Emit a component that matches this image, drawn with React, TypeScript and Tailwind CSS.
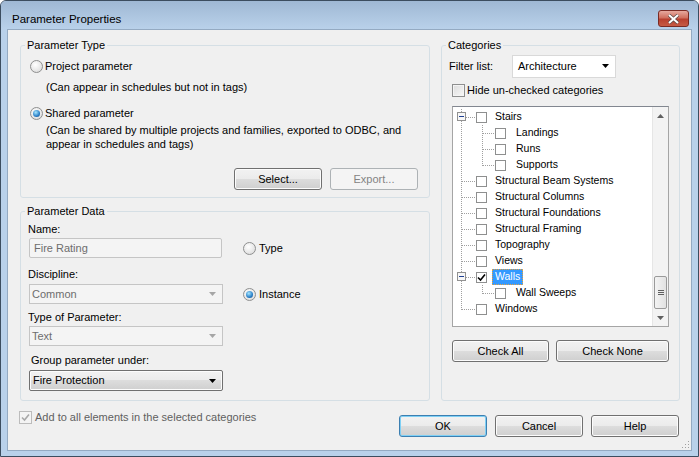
import React from "react";

type Row = {
  label: string;
  level: 0 | 1;
  expander?: boolean;
  checked?: boolean;
  selected?: boolean;
  last?: boolean;
};

const ROWS: Row[] = [
  { label: "Stairs", level: 0, expander: true },
  { label: "Landings", level: 1 },
  { label: "Runs", level: 1 },
  { label: "Supports", level: 1, last: true },
  { label: "Structural Beam Systems", level: 0 },
  { label: "Structural Columns", level: 0 },
  { label: "Structural Foundations", level: 0 },
  { label: "Structural Framing", level: 0 },
  { label: "Topography", level: 0 },
  { label: "Views", level: 0 },
  { label: "Walls", level: 0, expander: true, checked: true, selected: true },
  { label: "Wall Sweeps", level: 1, last: true },
  { label: "Windows", level: 0, last: true },
];

const BTN =
  "h-[22px] rounded-[3px] border flex items-center justify-center text-black border-[#707070] bg-[linear-gradient(#f2f2f2,#ebebeb_50%,#dddddd_50%,#cfcfcf)] shadow-[inset_0_0_0_1px_#fcfcfc]";

function Radio({ checked }: { checked?: boolean }) {
  return (
    <span className="w-[13px] h-[13px] shrink-0 rounded-full border border-[#8e8f8f] bg-[radial-gradient(circle_at_40%_35%,#ffffff,#d6d6d6)] flex items-center justify-center">
      {checked && (
        <span className="w-[7px] h-[7px] rounded-full bg-[radial-gradient(circle_at_40%_35%,#a6e6ff,#2a80c8_60%,#0d3f7a)]" />
      )}
    </span>
  );
}

function Tick({ color }: { color: string }) {
  return (
    <svg width="9" height="9" viewBox="0 0 9 9">
      <path d="M1 4.5 L3.5 7 L8 1.5" fill="none" stroke={color} strokeWidth="1.6" />
    </svg>
  );
}

function Arrow({ color }: { color: string }) {
  return (
    <svg width="7" height="4" viewBox="0 0 7 4">
      <path d="M0 0h7L3.5 4z" fill={color} />
    </svg>
  );
}

function Group({ title, className, children }: { title: string; className: string; children: React.ReactNode }) {
  return (
    <fieldset className={"border border-[#d5dfe5] rounded-[3px] min-w-0 " + className}>
      <legend className="ml-[4px] px-[2px] leading-[14px]">{title}</legend>
      {children}
    </fieldset>
  );
}

function Guides({ row }: { row: Row }) {
  const dot = { stroke: "#a0a0a0", strokeDasharray: "1 1" };
  if (row.level === 0) {
    return (
      <svg width="23" height="16" className="shrink-0">
        <line x1="8.5" y1="0" x2="8.5" y2={row.last ? 9 : 16} {...dot} />
        <line x1="9" y1="8.5" x2="23" y2="8.5" {...dot} />
        {row.expander && (
          <>
            <rect x="4.5" y="3.5" width="8" height="8" fill="#f7f7f7" stroke="#919191" />
            <rect x="6" y="7" width="5" height="1" fill="#1f3f93" />
          </>
        )}
      </svg>
    );
  }
  return (
    <svg width="42" height="16" className="shrink-0">
      <line x1="8.5" y1="0" x2="8.5" y2="16" {...dot} />
      <line x1="29.5" y1="0" x2="29.5" y2={row.last ? 9 : 16} {...dot} />
      <line x1="30" y1="8.5" x2="42" y2="8.5" {...dot} />
    </svg>
  );
}

function Tree() {
  return (
    <div className="ml-[10px] mt-[9px] w-[217px] h-[221px] border border-[#a5a5a5] border-t-[#828790] bg-white flex">
      <div className="flex-1 pt-[2px] overflow-hidden text-[10.5px]">
        {ROWS.map((r) => (
          <div key={r.label} className="flex items-center h-[16px] whitespace-nowrap">
            <Guides row={r} />
            <span className="w-[11px] h-[11px] shrink-0 border border-[#8e8f8f] bg-white flex items-center justify-center">
              {r.checked && <Tick color="#000" />}
            </span>
            <span
              className={
                "h-[16px] px-[2px] flex items-center border " +
                (r.level === 1 ? "ml-[7px] " : "ml-[5px] ") +
                (r.selected
                  ? "bg-[#3399ff] text-white border-dotted border-[#e9a13c]"
                  : "border-transparent")
              }
            >
              {r.label}
            </span>
          </div>
        ))}
      </div>
      <div className="w-[16px] bg-[#f3f3f3] border-l border-[#e6e6e6] flex flex-col">
        <div className="h-[17px] flex items-center justify-center">
          <svg width="7" height="4" viewBox="0 0 7 4">
            <path d="M0 4h7L3.5 0z" fill="#606060" />
          </svg>
        </div>
        <div className="flex-1 flex flex-col justify-end">
          <div className="h-[33px] mx-[1px] rounded-[2px] border border-[#9a9a9a] bg-[linear-gradient(90deg,#f3f3f3,#e2e2e2)] flex flex-col items-center justify-center gap-[1px]">
            <span className="w-[6px] h-[1px] bg-[#606060]" />
            <span className="w-[6px] h-[1px] bg-[#606060]" />
            <span className="w-[6px] h-[1px] bg-[#606060]" />
          </div>
        </div>
        <div className="h-[17px] flex items-center justify-center">
          <Arrow color="#606060" />
        </div>
      </div>
    </div>
  );
}

export default function App() {
  return (
    <div className="w-[699px] h-[457px] bg-[#b9d1ea] border border-[#3c4d5f] rounded-t-[6px] flex flex-col font-['Liberation_Sans',Arial,sans-serif] text-[11px] text-black overflow-hidden">
      <div className="h-[28px] shrink-0 flex items-start justify-between bg-[linear-gradient(#9fb8d4,#b9d1ea)]">
        <span className="ml-[11px] mt-[11px] leading-[14px] text-[11.5px]">Parameter Properties</span>
        <button className="mt-[9px] mr-[9px] w-[31px] h-[17px] rounded-[3px] border border-[#7a2b24] bg-[linear-gradient(#e6a99f,#d0705f_45%,#b8402f_55%,#c65b45)] flex items-center justify-center">
          <svg width="13" height="10" viewBox="0 0 13 10">
            <path d="M2 1 L11 9 M11 1 L2 9" stroke="#5a4a48" strokeWidth="3.4" />
            <path d="M2 1 L11 9 M11 1 L2 9" stroke="#ffffff" strokeWidth="2" />
          </svg>
        </button>
      </div>

      <div className="relative mx-[6px] mb-[5px] flex-1 border border-[#94aac2] bg-[#f0f0f0] flex flex-col">
        <div className="flex gap-[11px] pl-[12px] pr-[11px] pt-[8px]">
          <div className="w-[410px] flex flex-col">
            <Group title="Parameter Type" className="h-[160px]">
              <div className="pl-[9px] pt-[6px]">
                <label className="flex items-center h-[16px] gap-[2px]">
                  <Radio />
                  <span>Project parameter</span>
                </label>
                <p className="ml-[16px] mt-[6px] leading-[14px]">(Can appear in schedules but not in tags)</p>
                <label className="mt-[11px] flex items-center h-[16px] gap-[2px]">
                  <Radio checked />
                  <span>Shared parameter</span>
                </label>
                <p className="ml-[16px] mt-[2px] leading-[14px]">
                  (Can be shared by multiple projects and families, exported to ODBC, and
                  <br />
                  appear in schedules and tags)
                </p>
                <div className="mt-[17px] pr-[11px] flex justify-end gap-[8px]">
                  <button className={BTN + " w-[88px]"}>Select...</button>
                  <button className="w-[88px] h-[22px] rounded-[3px] border border-[#adb2b5] bg-[#f4f4f4] text-[#838383] flex items-center justify-center">
                    Export...
                  </button>
                </div>
              </div>
            </Group>

            <Group title="Parameter Data" className="mt-[6px] h-[197px]">
              <div className="pt-[4px] flex flex-col">
                <span className="ml-[7px] leading-[14px]">Name:</span>
                <div className="mt-[2px] flex items-center">
                  <div className="ml-[8px] w-[193px] h-[20px] rounded-[2px] border border-[#c5c5c5] bg-[#f4f4f4] text-[#6d6d6d] pl-[4px] flex items-center">
                    Fire Rating
                  </div>
                  <label className="ml-[21px] flex items-center gap-[3px]">
                    <Radio />
                    <span>Type</span>
                  </label>
                </div>
                <span className="ml-[7px] mt-[9px] leading-[14px]">Discipline:</span>
                <div className="mt-[3px] flex items-start">
                  <div className="ml-[8px] w-[194px] h-[20px] border border-[#c5c5c5] bg-[#f4f4f4] text-[#6d6d6d] pl-[2px] pr-[6px] flex items-center justify-between">
                    <span>Common</span>
                    <Arrow color="#a6a6a6" />
                  </div>
                  <label className="ml-[20px] mt-[2px] flex items-center gap-[3px]">
                    <Radio checked />
                    <span>Instance</span>
                  </label>
                </div>
                <span className="ml-[7px] mt-[6px] leading-[14px]">Type of Parameter:</span>
                <div className="mt-[2px] ml-[8px] w-[194px] h-[20px] border border-[#c5c5c5] bg-[#f4f4f4] text-[#6d6d6d] pl-[2px] pr-[6px] flex items-center justify-between">
                  <span>Text</span>
                  <Arrow color="#a6a6a6" />
                </div>
                <span className="ml-[10px] mt-[7px] leading-[14px]">Group parameter under:</span>
                <div className="mt-[3px] ml-[8px] w-[194px] h-[21px] rounded-[2px] border border-[#707070] bg-[linear-gradient(#f2f2f2,#ebebeb_50%,#dddddd_50%,#cfcfcf)] shadow-[inset_0_0_0_1px_#fcfcfc] pl-[3px] pr-[6px] flex items-center justify-between">
                  <span>Fire Protection</span>
                  <Arrow color="#000000" />
                </div>
              </div>
            </Group>
          </div>

          <Group title="Categories" className="flex-1 h-[363px]">
            <div className="flex flex-col">
              <div className="mt-[2px] ml-[7px] h-[24px] flex items-center">
                <span className="w-[63px]">Filter list:</span>
                <div className="w-[104px] h-[23px] border border-[#d9d9d9] bg-white pl-[5px] pr-[6px] flex items-center justify-between">
                  <span>Architecture</span>
                  <Arrow color="#000000" />
                </div>
              </div>
              <label className="mt-[5px] ml-[10px] h-[14px] flex items-center gap-[2px]">
                <span className="w-[13px] h-[13px] border border-[#8e8f8f] bg-[linear-gradient(135deg,#dcdcdc,#f8f8f8)] shadow-[inset_0_0_0_1px_#f4f4f4]" />
                <span>Hide un-checked categories</span>
              </label>
              <Tree />
              <div className="mt-[13px] ml-[10px] flex gap-[7px]">
                <button className={BTN + " w-[97px]"}>Check All</button>
                <button className={BTN + " w-[113px]"}>Check None</button>
              </div>
            </div>
          </Group>
        </div>

        <div className="flex items-start justify-between pl-[11px] pr-[12px]">
          <label className="mt-[9px] h-[14px] flex items-center gap-[3px] text-[#5f5f5f]">
            <span className="w-[13px] h-[13px] border border-[#bcbcbc] bg-[#f4f4f4] flex items-center justify-center">
              <Tick color="#a8a8a8" />
            </span>
            <span>Add to all elements in the selected categories</span>
          </label>
          <div className="mt-[14px] flex gap-[8px]">
            <button className="w-[88px] h-[22px] rounded-[3px] border border-[#3c7fb1] bg-[linear-gradient(#f2f2f2,#ebebeb_50%,#dddddd_50%,#cfcfcf)] shadow-[inset_0_0_0_1px_#7fd0f5] flex items-center justify-center">
              OK
            </button>
            <button className={BTN + " w-[88px]"}>Cancel</button>
            <button className={BTN + " w-[88px]"}>Help</button>
          </div>
        </div>

        <svg width="9" height="9" className="absolute right-[1px] bottom-[1px]">
          <rect x="7" y="1" width="1" height="1" fill="#a0a0a0" />
          <rect x="4" y="4" width="1" height="1" fill="#a0a0a0" />
          <rect x="7" y="4" width="1" height="1" fill="#a0a0a0" />
          <rect x="1" y="7" width="1" height="1" fill="#a0a0a0" />
          <rect x="4" y="7" width="1" height="1" fill="#a0a0a0" />
          <rect x="7" y="7" width="1" height="1" fill="#a0a0a0" />
        </svg>
      </div>
    </div>
  );
}
